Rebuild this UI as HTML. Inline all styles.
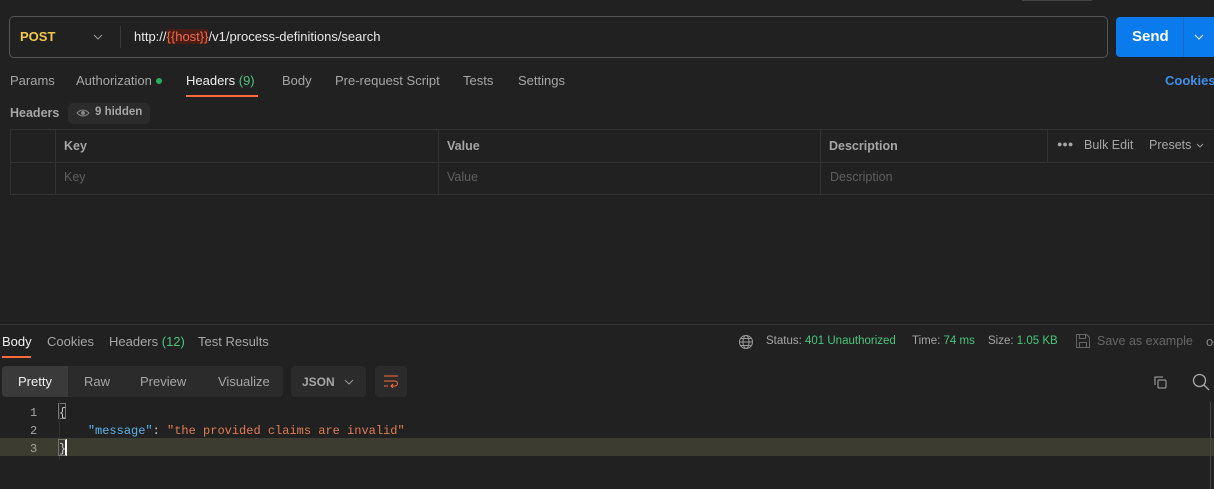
<!DOCTYPE html><html><head><style>
body{margin:0;width:1214px;height:489px;background:#212121;font-family:"Liberation Sans",sans-serif;color:#a6a6a6;font-size:13px;position:relative;overflow:hidden}
.a{position:absolute;white-space:nowrap}
.g{color:#49c57b}
</style></head><body>
<div class="a" style="left:1022px;top:0;width:70px;height:1px;background:#444"></div>
<div class="a" style="left:9px;top:16px;width:1097px;height:40px;border:1px solid #555;border-radius:5px"></div>
<div class="a" style="left:20px;top:29px;color:#f2c94c;font-weight:bold;font-size:13px">POST</div>
<svg class="a" style="left:93px;top:33px" width="10" height="8"><path d="M1 2l4 4 4-4" stroke="#999" fill="none"/></svg>
<div class="a" style="left:120px;top:26px;width:1px;height:22px;background:#3a3a3a"></div>
<div class="a" style="left:134px;top:29px;color:#e8e8e8">http://<span style="background:#4a1d14;color:#ee6a4c">{{host}}</span>/v1/process-definitions/search</div>
<div class="a" style="left:1116px;top:17px;width:98px;height:40px;background:#097bed;border-radius:4px 0 0 4px"></div>
<div class="a" style="left:1183px;top:17px;width:1px;height:40px;background:#1b6cc0"></div>
<div class="a" style="left:1132px;top:28px;color:#fff;font-weight:bold;font-size:15px">Send</div>
<svg class="a" style="left:1194px;top:33px" width="10" height="8"><path d="M1 2l4 4 4-4" stroke="#fff" fill="none"/></svg>
<div class="a" style="left:10px;top:73px">Params</div>
<div class="a" style="left:76px;top:73px">Authorization <span style="display:inline-block;width:6px;height:6px;border-radius:3px;background:#26b05b;vertical-align:1px"></span></div>
<div class="a" style="left:186px;top:73px;color:#f0f0f0">Headers <span class="g">(9)</span></div>
<div class="a" style="left:186px;top:95px;width:72px;height:2px;background:#ff6c37"></div>
<div class="a" style="left:282px;top:73px">Body</div>
<div class="a" style="left:335px;top:73px">Pre-request Script</div>
<div class="a" style="left:463px;top:73px">Tests</div>
<div class="a" style="left:518px;top:73px">Settings</div>
<div class="a" style="left:1165px;top:73px;color:#3f8fe8;font-weight:bold">Cookies</div>
<div class="a" style="left:10px;top:106px;font-weight:bold;color:#a6a6a6;font-size:12.5px">Headers</div>
<div class="a" style="left:68px;top:103px;width:82px;height:21px;background:#2b2b2b;border-radius:5px"></div>
<svg class="a" style="left:76px;top:108px" width="14" height="10"><path d="M1 5Q7-1 13 5Q7 11 1 5Z" fill="none" stroke="#888"/><circle cx="7" cy="5" r="2" fill="#888"/></svg>
<div class="a" style="left:95px;top:106px;font-size:11.5px;font-weight:bold;color:#a6a6a6">9 hidden</div>
<div class="a" style="left:10px;top:129px;width:1204px;height:66px;border:1px solid #333;border-right:0;box-sizing:border-box"></div>
<div class="a" style="left:10px;top:162px;width:1204px;height:1px;background:#333"></div>
<div class="a" style="left:55px;top:129px;width:1px;height:66px;background:#333"></div>
<div class="a" style="left:438px;top:129px;width:1px;height:66px;background:#333"></div>
<div class="a" style="left:820px;top:129px;width:1px;height:66px;background:#333"></div>
<div class="a" style="left:1047px;top:129px;width:1px;height:33px;background:#333"></div>
<div class="a" style="left:64px;top:139px;font-weight:bold;font-size:12.5px">Key</div>
<div class="a" style="left:447px;top:139px;font-weight:bold;font-size:12.5px">Value</div>
<div class="a" style="left:829px;top:139px;font-weight:bold;font-size:12.5px">Description</div>
<div class="a" style="left:1057px;top:139px;font-size:9px;letter-spacing:0px">●●●</div>
<div class="a" style="left:1084px;top:138px;font-size:12.5px">Bulk Edit</div>
<div class="a" style="left:1149px;top:138px;font-size:12.5px">Presets</div>
<svg class="a" style="left:1196px;top:143px" width="8" height="6"><path d="M1 1l3 3 3-3" stroke="#999" fill="none"/></svg>
<div class="a" style="left:64px;top:170px;color:#5f5f5f;font-size:12.5px">Key</div>
<div class="a" style="left:447px;top:170px;color:#5f5f5f;font-size:12.5px">Value</div>
<div class="a" style="left:830px;top:170px;color:#5f5f5f;font-size:12.5px">Description</div>
<div class="a" style="left:0;top:324px;width:1214px;height:1px;background:#333"></div>
<div class="a" style="left:2px;top:334px;color:#f0f0f0">Body</div>
<div class="a" style="left:2px;top:356px;width:29px;height:2px;background:#ff6c37"></div>
<div class="a" style="left:47px;top:334px">Cookies</div>
<div class="a" style="left:109px;top:334px">Headers <span class="g">(12)</span></div>
<div class="a" style="left:198px;top:334px">Test Results</div>
<svg class="a" style="left:738px;top:334px" width="16" height="16" fill="none" stroke="#999"><circle cx="8" cy="8" r="6.5"/><ellipse cx="8" cy="8" rx="3" ry="6.5"/><path d="M1.5 8h13M3 4.5h10M3 11.5h10"/></svg>
<div class="a" style="left:766px;top:335px;font-size:11.5px">Status: <span class="g">401 Unauthorized</span></div>
<div class="a" style="left:912px;top:335px;font-size:11.5px">Time: <span class="g">74 ms</span></div>
<div class="a" style="left:988px;top:335px;font-size:11.5px">Size: <span class="g">1.05 KB</span></div>
<svg class="a" style="left:1075px;top:333px" width="16" height="16" fill="none" stroke="#666"><path d="M1.5 1.5h10l3 3v10h-13z M4.5 1.5v4h6v-4 M4.5 14.5v-5h7v5"/></svg>
<div class="a" style="left:1097px;top:334px;color:#666;font-size:12.5px">Save as example</div>
<div class="a" style="left:1206px;top:334px;color:#888">oo</div>
<div class="a" style="left:2px;top:366px;width:281px;height:31px;background:#2b2b2b;border-radius:4px"></div>
<div class="a" style="left:2px;top:366px;width:66px;height:31px;background:#3a3a3a;border-radius:4px 0 0 4px"></div>
<div class="a" style="left:18px;top:374px;color:#f0f0f0">Pretty</div>
<div class="a" style="left:84px;top:374px">Raw</div>
<div class="a" style="left:140px;top:374px">Preview</div>
<div class="a" style="left:218px;top:374px">Visualize</div>
<div class="a" style="left:291px;top:366px;width:75px;height:31px;background:#2b2b2b;border-radius:4px"></div>
<div class="a" style="left:302px;top:375px;font-size:12px;font-weight:bold">JSON</div>
<svg class="a" style="left:344px;top:379px" width="10" height="7"><path d="M1 1l4 4 4-4" stroke="#999" fill="none"/></svg>
<div class="a" style="left:375px;top:366px;width:32px;height:31px;background:#2b2b2b;border-radius:4px"></div>
<svg class="a" style="left:383px;top:374px" width="16" height="14" fill="none" stroke="#ff6c37"><path d="M1 2h14M1 7h11a2.5 2.5 0 010 5H8m2-2l-2 2 2 2M1 12h4"/></svg>
<svg class="a" style="left:1152px;top:374px" width="16" height="16" fill="none" stroke="#aaa"><path d="M3 11V3h8"/><rect x="6" y="6" width="8" height="8" rx="1"/></svg>
<svg class="a" style="left:1192px;top:373px" width="18" height="18" fill="none" stroke="#aaa" stroke-width="1.3"><circle cx="7.5" cy="7.5" r="6"/><path d="M12 12l5 5"/></svg>
<div class="a" style="left:0;top:438px;width:1214px;height:18px;background:#3c3c30"></div>
<div class="a" style="left:1210px;top:402px;width:1px;height:87px;background:#444"></div>
<div class="a" style="font-family:'Liberation Mono',monospace;font-size:12px;left:30px;top:404px;line-height:18px;color:#a6a6a6">1<br>2<br>3</div>
<div class="a" style="left:58px;top:403px;width:6px;height:14px;border:1px solid #777"></div>
<div class="a" style="left:59px;top:400px;width:1px;height:60px;background:#333"></div>
<div class="a" style="left:58px;top:439px;width:6px;height:15px;border:1px solid #777;border-right:2px solid #fff"></div>
<div class="a" style="font-family:'Liberation Mono',monospace;font-size:12px;left:59px;top:404px;line-height:18px;color:#ccc">{<br>&nbsp;&nbsp;&nbsp;&nbsp;<span style="color:#5cb4ee">"message"</span>: <span style="color:#e07c55">"the provided claims are invalid"</span><br>}</div>
</body></html>
